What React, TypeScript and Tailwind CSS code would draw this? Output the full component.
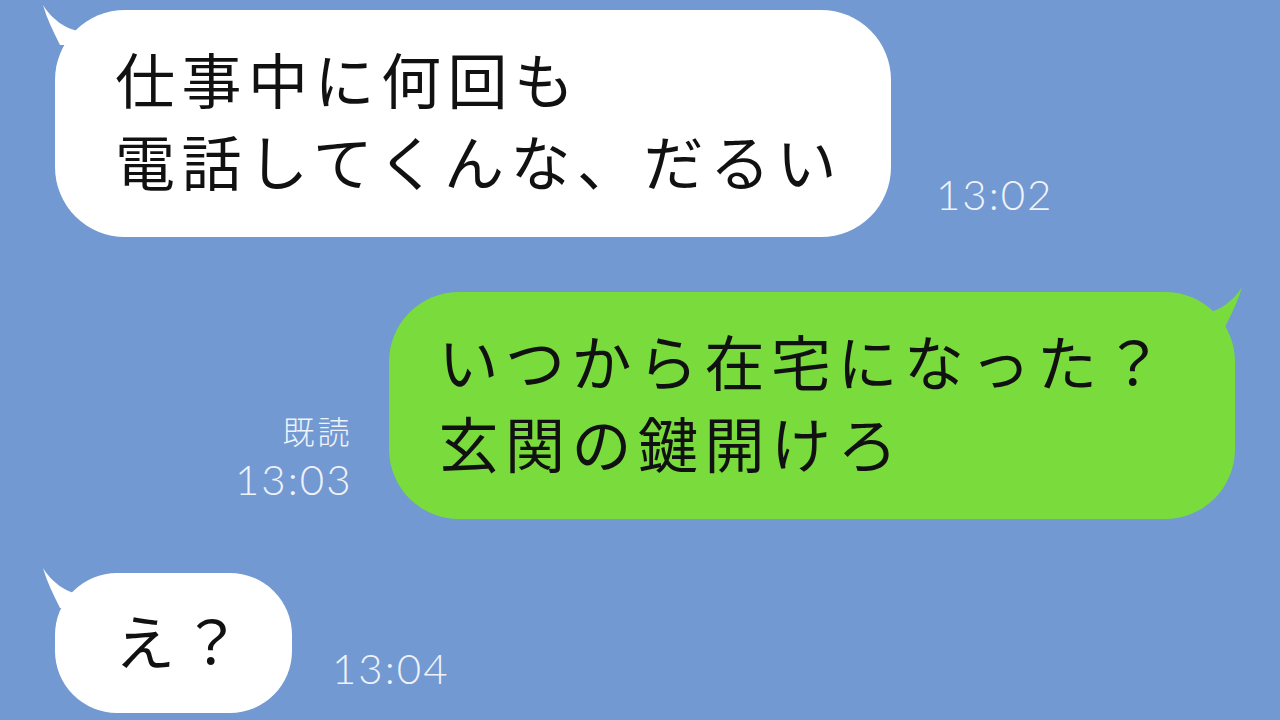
import React from "react";

const jp = { fontFamily: '"Noto Sans CJK JP", "Noto Sans", sans-serif' };
const ts = { fontFamily: 'Lato, "Noto Sans", sans-serif' };

function TailLeft({ color }: { color: string }) {
  return (
    <svg className="absolute" style={{ left: -12, top: -5 }} width="50" height="50" viewBox="0 0 50 50">
      <path d="M0,0 C4,14 10,26 17,40 L45,40 L45,27 C26,27 10,16 0,0 Z" fill={color} />
    </svg>
  );
}

function TailRight({ color }: { color: string }) {
  return (
    <svg className="absolute" style={{ right: -7, top: -5 }} width="50" height="50" viewBox="0 0 50 50">
      <path d="M50,0 C46,14 40,26 33,40 L5,40 L5,27 C24,27 40,16 50,0 Z" fill={color} />
    </svg>
  );
}

export default function App() {
  return (
    <div className="w-[1280px] h-[720px] bg-[#7299d1] overflow-hidden flex flex-col" style={jp}>
      {/* Row 1 */}
      <div className="flex items-end pl-[55px] pt-[10px]">
        <div className="relative bg-white rounded-[70px] pl-[60px] pr-[48px] pt-[27px] pb-[36px]">
          <TailLeft color="#ffffff" />
          <div className="relative text-[60px] leading-[82px] tracking-[6.5px] text-[#111]">
            <div>仕事中に何回も</div>
            <div>電話してくんな、だるい</div>
          </div>
        </div>
        <div className="ml-[45px] mb-[22px] text-[42px] leading-none font-light tracking-[2px] text-[#eef2fa]" style={ts}>13:02</div>
      </div>

      {/* Row 2 */}
      <div className="flex items-end justify-end pr-[45px] mt-[55px]">
        <div className="flex flex-col items-end mr-[36px] mb-[18px] text-[#eef2fa] font-light">
          <div className="text-[32px] leading-[34px] tracking-[3px]">既読</div>
          <div className="text-[42px] leading-[44px] tracking-[2px] mt-[10px]" style={ts}>13:03</div>
        </div>
        <div className="relative bg-[#79dc3c] rounded-[70px] pl-[50px] pr-[65px] pt-[27px] pb-[36px]">
          <TailRight color="#79dc3c" />
          <div className="relative text-[60px] leading-[82px] tracking-[6.5px] text-[#111]">
            <div>いつから在宅になった？</div>
            <div>玄関の鍵開けろ</div>
          </div>
        </div>
      </div>

      {/* Row 3 */}
      <div className="flex items-end pl-[55px] mt-[54px]">
        <div className="relative bg-white rounded-[62px] h-[140px] pl-[60px] pr-[44px] pb-[8px] flex items-center">
          <TailLeft color="#ffffff" />
          <div className="relative text-[60px] leading-[82px] tracking-[6.5px] text-[#111]">え？</div>
        </div>
        <div className="ml-[40px] mb-[24px] text-[42px] leading-none font-light tracking-[2px] text-[#eef2fa]" style={ts}>13:04</div>
      </div>
    </div>
  );
}
